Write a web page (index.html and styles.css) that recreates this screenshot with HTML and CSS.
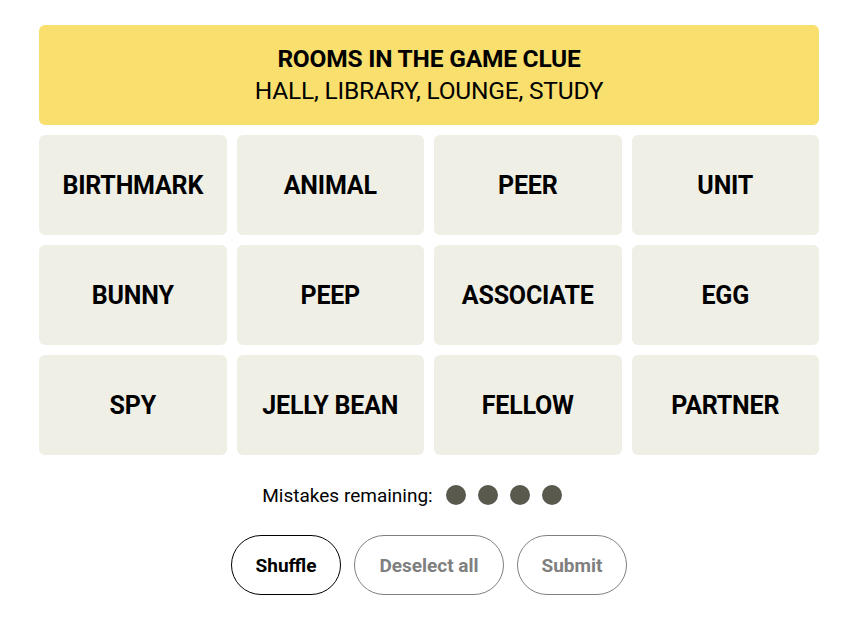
FILE: index.html
```html
<!DOCTYPE html>
<html>
<head>
<meta charset="utf-8">
<link rel="stylesheet" href="styles.css">
</head>
<body>
<div class="game">
  <div class="solved">
    <div class="solved-title">ROOMS IN THE GAME CLUE</div>
    <div class="solved-words">HALL, LIBRARY, LOUNGE, STUDY</div>
  </div>
  <div class="grid">
    <div class="tile">BIRTHMARK</div>
    <div class="tile">ANIMAL</div>
    <div class="tile">PEER</div>
    <div class="tile">UNIT</div>
    <div class="tile">BUNNY</div>
    <div class="tile">PEEP</div>
    <div class="tile">ASSOCIATE</div>
    <div class="tile">EGG</div>
    <div class="tile">SPY</div>
    <div class="tile">JELLY BEAN</div>
    <div class="tile">FELLOW</div>
    <div class="tile">PARTNER</div>
  </div>
  <div class="mistakes">
    <span class="mistakes-label">Mistakes remaining:</span>
    <span class="dots"><span class="dot"></span><span class="dot"></span><span class="dot"></span><span class="dot"></span></span>
  </div>
  <div class="controls">
    <button class="btn btn-active btn-shuffle">Shuffle</button>
    <button class="btn btn-disabled btn-deselect">Deselect all</button>
    <button class="btn btn-disabled btn-submit">Submit</button>
  </div>
</div>
</body>
</html>
```
FILE: styles.css
```css
html, body {
  margin: 0;
  padding: 0;
  background: #ffffff;
}
body {
  font-family: Roboto, "Liberation Sans", sans-serif;
  color: #000;
}
.game {
  width: 780px;
  margin: 0 auto;
  padding-top: 25px;
  display: flex;
  flex-direction: column;
}
.solved {
  height: 100px;
  background: #f9df6d;
  border-radius: 6px;
  display: flex;
  flex-direction: column;
  align-items: center;
  justify-content: center;
  margin-bottom: 10px;
}
.solved-title {
  font-weight: 700;
  font-size: 24.5px;
  line-height: 32px;
  letter-spacing: -0.2px;
}
.solved-words {
  font-size: 24.5px;
  line-height: 32px;
  letter-spacing: -0.2px;
}
.grid {
  display: grid;
  grid-template-columns: repeat(4, 1fr);
  grid-auto-rows: 100px;
  gap: 10px;
}
.tile {
  background: #efefe6;
  border-radius: 6px;
  display: flex;
  align-items: center;
  justify-content: center;
  font-weight: 700;
  font-size: 25px;
  letter-spacing: -0.2px;
}
.mistakes {
  display: flex;
  justify-content: center;
  align-items: center;
  margin-top: 28px;
  height: 24px;
  font-size: 19px;
  padding-right: 34px;
}
.mistakes-label {
  margin-right: 13px;
}
.dots {
  display: flex;
  gap: 12px;
}
.dot {
  width: 20px;
  height: 20px;
  border-radius: 50%;
  background: #5a594e;
}
.controls {
  display: flex;
  justify-content: center;
  gap: 13px;
  margin-top: 28px;
}
.btn {
  height: 60px;
  border-radius: 30px;
  background: #fff;
  font-family: Roboto, "Liberation Sans", sans-serif;
  font-weight: 700;
  font-size: 19px;
  padding: 0;
}
.btn-active {
  border: 1px solid #000;
  color: #000;
}
.btn-disabled {
  border: 1px solid #7f7f7f;
  color: #7f7f7f;
}
.btn-shuffle { width: 110px; }
.btn-deselect { width: 150px; }
.btn-submit { width: 110px; }
```
